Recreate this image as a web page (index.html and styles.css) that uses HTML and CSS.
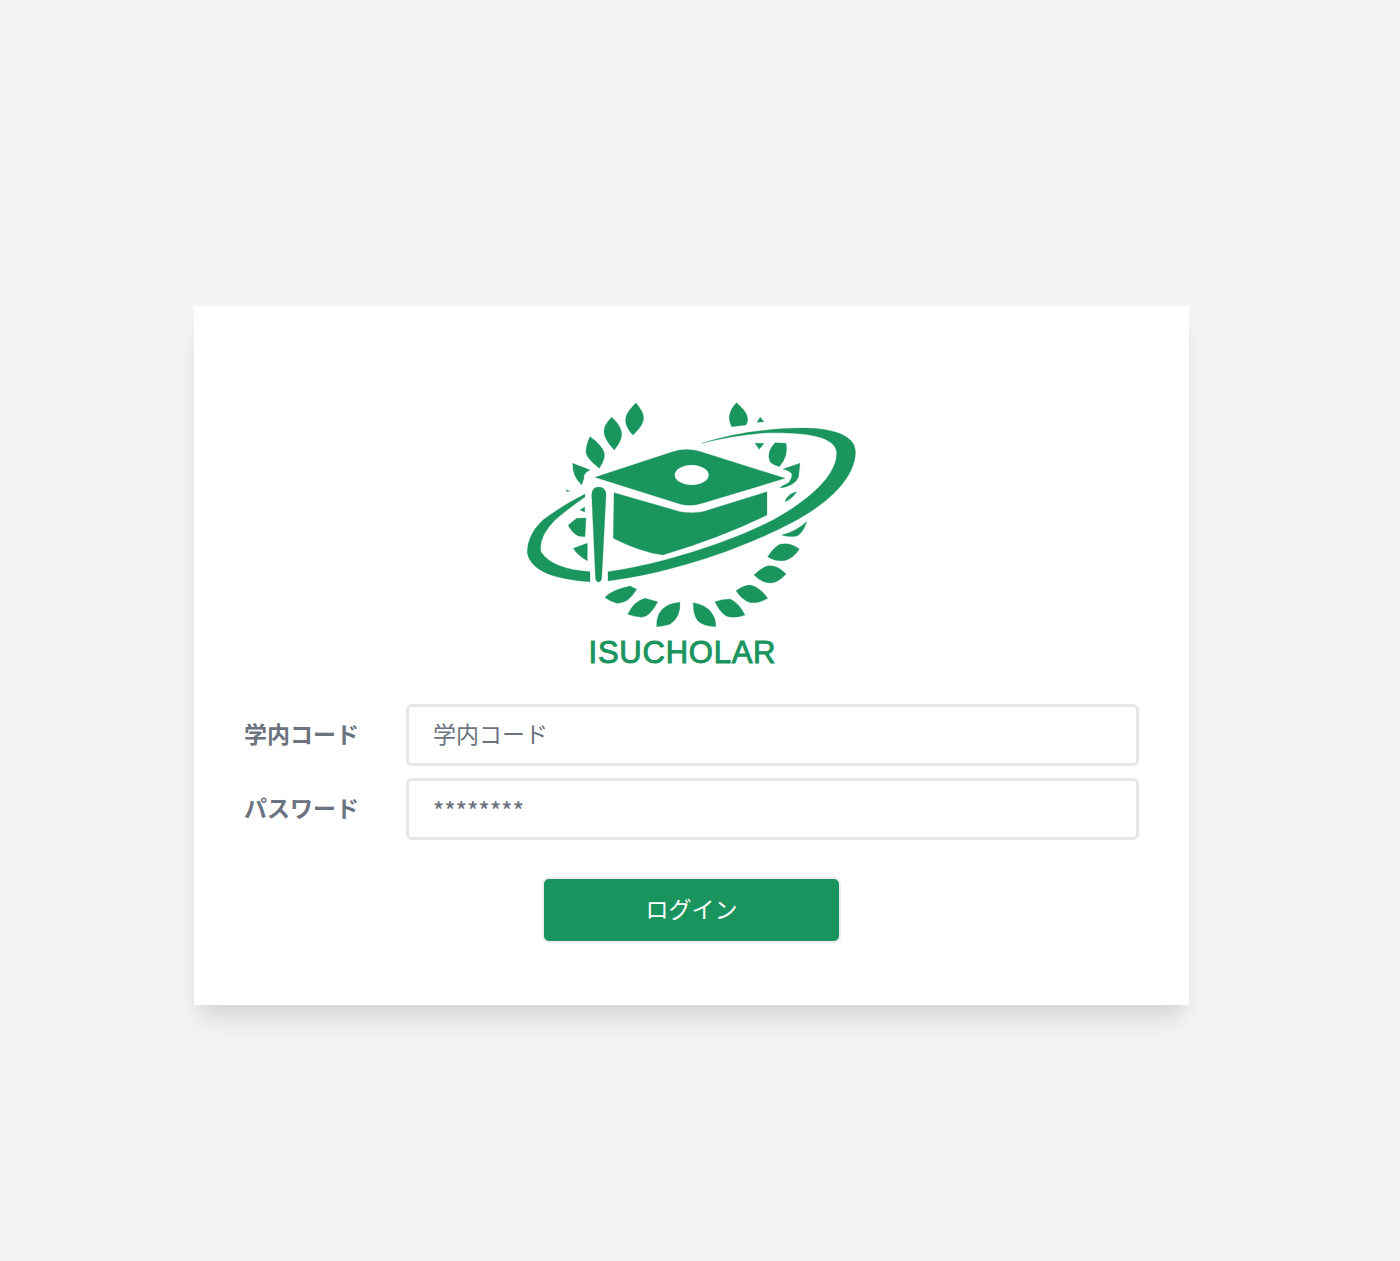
FILE: index.html
```html
<!DOCTYPE html>
<html lang="ja">
<head>
<meta charset="utf-8">
<title>ログイン</title>
<link rel="stylesheet" href="styles.css">
</head>
<body>
<main class="card">
  <div class="logo-wrap">
    <svg class="logo" viewBox="521 395 341 275" width="341" height="275" role="img" aria-label="ISUCHOLAR">
      <!-- leaves, upper left -->
      <path d="M636 403C640 408 644 413 643.5 419C643 425 637 431 633 435C629 431 625 425 625.7 419C626 413 632 407 636 403Z"/>
      <path d="M611.7 417.3C616 421 621 427 621.7 433C622 440 618 445 614.3 450C610 445 604 438 604 431.7C604 426 608 421 611.7 417.3Z"/>
      <path d="M590 436.7C595 440 603 447 604.3 453.3C605 459 602 464 599.3 468.3C593 463 586 457 586 451.7C586 446 588 441 590 436.7Z"/>
      <path d="M572.7 463.3L590 470Q583 473 584 478L581.7 485Q572 476 572.7 463.3Z"/>
      <path d="M566 490L570 491L566.5 491.5Z"/>
      <path d="M580 510L584.7 507L584.7 512Z"/>
      <path d="M568.3 525L576.7 518.3L586 518L585 536.7L578.3 536Q571 532 568.3 525Z"/>
      <path d="M573.3 548.3L587.3 543.3L587.3 560.7Q578 556 573.3 548.3Z"/>
      <!-- leaves, upper right -->
      <path d="M736.7 402.7C741 407 747 412 747.5 418C748 421 747 423 746 425L731.7 426.7C730 423 729 420 729.3 416.7C730 411 733 406 736.7 402.7Z"/>
      <path d="M760.3 417.3L764 421.7L757 422.3Z"/>
      <path d="M755 443.3L764 443.3L759.3 449.3Z"/>
      <path d="M775 442.7L786 443.3Q789 456 779.3 466.7Q772 464 770 461.7Q766 452 775 442.7Z"/>
      <path d="M783 469L800 463.3L798.5 477Q795 486 780 488L782 486Q792 483 792 474Q790 471 783 469Z"/>
      <path d="M796.7 491.7Q787 494 785 501.7Q792 499 796.7 491.7Z"/>
      <!-- leaves, bottom -->
      <path d="M605 597.7Q609 591 630 586L636.7 589.3Q628 604 616.7 603.3Q610 601 605 597.7Z"/>
      <path d="M627.7 614.3Q634 601 645 598.3L657.7 601.7Q650 617 641.7 617.3Q635 617 627.7 614.3Z"/>
      <path d="M656.7 626.7Q656 612 666.7 606Q672 603 680 602.3Q681 617 670 624.3Q664 626 656.7 626.7Z"/>
      <path d="M693.3 602.7Q706 605 711 612Q716 618 715.7 626.7Q703 626 698 621Q693 615 693.3 602.7Z"/>
      <path d="M715 601.7Q722 599 730 599Q738 602 745 615Q735 619 726 616Q719 611 715 601.7Z"/>
      <path d="M736 590.7Q744 585 750 585Q760 587 767.7 598.3Q758 604 750 602.5Q742 600 736 590.7Z"/>
      <path d="M754 575Q762 567 768.3 565.7Q778 565 786 574Q778 583 770 583Q762 583 754 575Z"/>
      <path d="M767.7 556.7Q774 547 780 544.3Q790 542 799.3 549Q794 558 785 560.5Q775 562 767.7 556.7Z"/>
      <path d="M781.7 535Q795 532 806.7 521.7Q803 533 797 536Q789 537.5 781.7 535Z"/>
      <!-- orbit -->
      <path d="M585 494Q563 505 543 520Q527 535 527.3 553Q532 578 590 581.7L590 571.7Q552 569 541 552Q538 537 555 520Q570 507 585 497Z"/>
      <path d="M608 571.7C650 566 720 547 773 520C810 500 837 475 836.7 453C836 436 805 432 763 433Q730 436 701.7 443.3Q735 433 763 430.5C800 426 855 425 855.5 452C855 480 825 505 793 522C740 550 670 573 608 581Z"/>
      <!-- cap -->
      <path d="M595 477.3L672 452Q686 447.5 700 451.5L785 478.3L703 503Q691 507 680 504Z"/>
      <ellipse class="logo-hole" cx="691.7" cy="475" rx="17" ry="10"/>
      <path d="M614 492.7L680 511.7Q691 514 703 511.7L767 491.7L767 515Q720 538 662.7 555Q640 552 613.3 538.3Z"/>
      <path d="M591.7 495Q592 487 598.5 487Q606 487 606 495L601.7 578Q601 582 598.5 582Q596 582 595.5 578Z"/>
      <text class="logo-text" x="588.5" y="663" textLength="187" lengthAdjust="spacing">ISUCHOLAR</text>
    </svg>
  </div>
  <form class="form">
    <div class="row">
      <label class="label" for="code">学内コード</label>
      <input class="input" id="code" type="text" placeholder="学内コード">
    </div>
    <div class="row">
      <label class="label" for="pass">パスワード</label>
      <input class="input input-secret" id="pass" type="text" placeholder="********">
    </div>
    <div class="actions">
      <button class="button" type="button">ログイン</button>
    </div>
  </form>
</main>
</body>
</html>
```
FILE: styles.css
```css
* {
  box-sizing: border-box;
}

html,
body {
  margin: 0;
  height: 100%;
}

body {
  background: #f3f4f6;
  font-family: "Liberation Sans", "Noto Sans CJK JP", sans-serif;
  padding: 306px 211px 0 194px;
}

.card {
  width: 995px;
  height: 699px;
  background: #fff;
  padding: 89px 50px 63px;
  box-shadow: 0 20px 25px -5px rgba(0, 0, 0, .1), 0 10px 10px -5px rgba(0, 0, 0, .04);
}

.logo-wrap {
  display: flex;
  justify-content: center;
  margin-bottom: 34px;
}

.logo {
  display: block;
  fill: #1a955e;
  stroke: #1a955e;
  stroke-width: .3;
}

.logo-hole {
  fill: #fff;
  stroke: none;
}

.logo-text {
  font-family: "Liberation Sans", sans-serif;
  font-size: 31px;
  font-weight: 400;
  stroke-width: 1;
}

.form {
  display: flex;
  flex-direction: column;
  gap: 12px;
}

.row {
  display: grid;
  grid-template-columns: 162px 1fr;
  align-items: center;
}

.label {
  font-family: "Noto Sans CJK JP", sans-serif;
  font-size: 23px;
  font-weight: 700;
  color: #6b7280;
  padding-bottom: 5px;
}

.input {
  height: 62px;
  width: 100%;
  border: 3px solid #e5e7eb;
  border-radius: 6px;
  padding: 0 24px 5px;
  background: #fff;
  font-family: "Noto Sans CJK JP", sans-serif;
  font-size: 23px;
  color: #374151;
  outline: none;
}

.input-secret {
  padding-bottom: 0;
  letter-spacing: .25px;
  font-weight: 500;
}

.input::placeholder {
  color: #6b7280;
  opacity: 1;
}

.actions {
  display: flex;
  justify-content: center;
  margin-top: 25px;
}

.button {
  width: 299px;
  height: 66px;
  background: #1a945e;
  border: 2px solid #eceef1;
  border-radius: 7px;
  padding: 0 0 5px;
  color: #fff;
  font-family: "Noto Sans CJK JP", sans-serif;
  font-size: 23px;
}
```
